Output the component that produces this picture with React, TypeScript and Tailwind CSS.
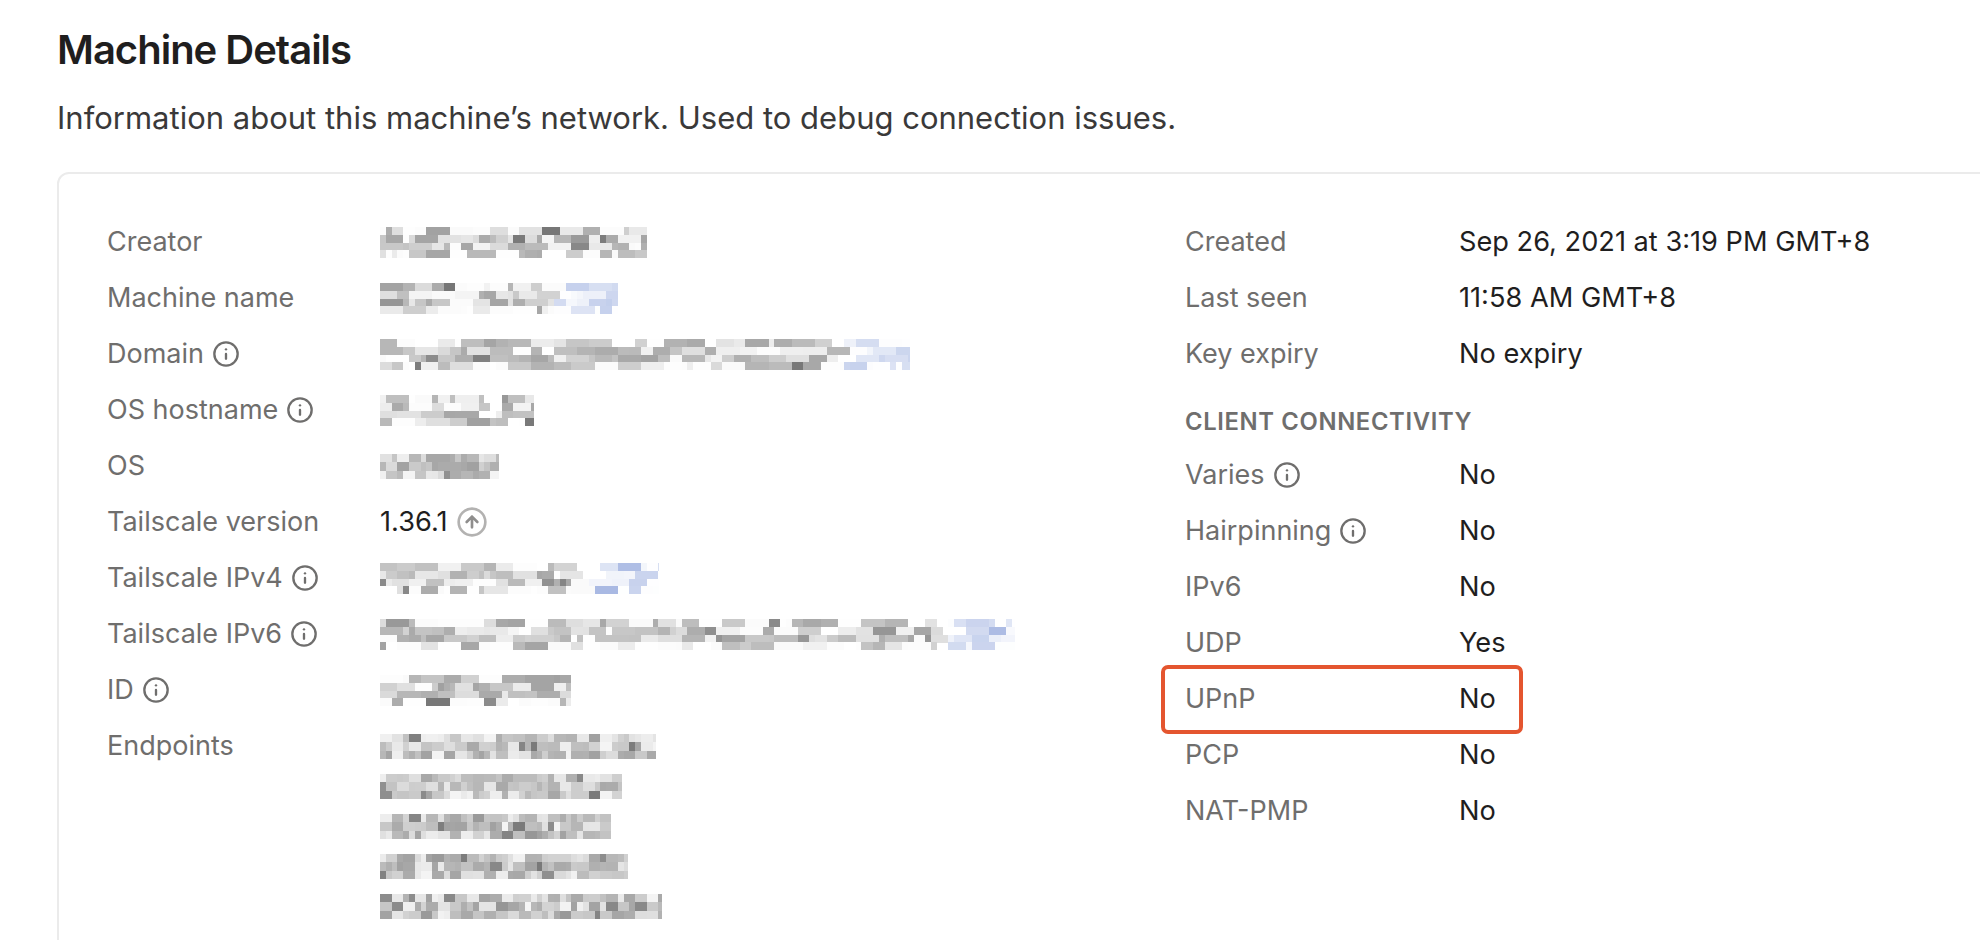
import { Info } from "lucide-react";

//seeded random so the blurred blocks are the same on every load
function makeRandom(seed: number) {
  let s = seed;
  return () => {
    s = (s * 1664525 + 1013904223) % 4294967296;
    return s / 4294967296;
  };
}

type MosaicProps = { width: number; height: number; seed: number; blueFrom?: number; gapAt?: [number, number]; dense?: boolean };

// ink 0..1 -> colour of one blurred block
function blockColor(ink: number, blue: boolean) {
  if (blue) {
    return `rgb(${Math.round(255 - ink * 80)},${Math.round(255 - ink * 65)},${Math.round(255 - ink * 26)})`;
  }
  const g = Math.round(255 - ink * 125);
  return `rgb(${g},${g},${g})`;
}

function Mosaic({ width, height, seed, blueFrom, gapAt, dense }: MosaicProps) {
  const cell = 5.8;
  const rand = makeRandom(seed * 7919);
  for (let i = 0; i < 8; i++) rand();
  const rows = Math.round(height / 7.75);
  const cellH = height / rows;
  const cols = Math.ceil(width / cell);
  const cells = [];
  for (let r = 0; r < rows; r++) {
    //top and bottom rows only had the tall letters and descenders in them
    const weight = dense ? 1.25 : r === rows - 1 ? 0.6 : r === 0 ? 0.85 : 1.1;
    let c = 0;
    while (c < cols) {
      const run = 1 + Math.floor(rand() * (dense ? 2 : 4));
      const pick = rand() / weight;
      let ink;
      if (pick < 0.52) ink = 0.35 + rand() * 0.4;
      else if (pick < 0.58) ink = 0.8 + rand() * 0.3;
      else if (pick < 0.84) ink = 0.08 + rand() * 0.22;
      else ink = rand() * 0.04;
      const x = c * cell;
      const w = Math.min(run * cell, width - x);
      const blue = blueFrom !== undefined && x >= blueFrom;
      const skip = gapAt && x >= gapAt[0] && x < gapAt[1];
      if (!skip && w > 0) {
        cells.push(<rect key={`${r}-${c}`} x={x} y={r * cellH} width={w} height={cellH + 0.5} fill={blockColor(ink, blue)} />);
      }
      c += run;
    }
  }
  return (
    <svg width={width} height={height} viewBox={`0 0 ${width} ${height}`} shapeRendering="crispEdges" className="block">
      {cells}
    </svg>
  );
}

function Label({ text, info }: { text: string; info?: boolean }) {
  return (
    <div className="flex items-center gap-[8px] text-[#6f6e6d]">
      <span>{text}</span>
      {info && <Info size={28} strokeWidth={2} className="text-[#6f6e6d]" />}
    </div>
  );
}

function Row({ label, info, width, children }: { label: string; info?: boolean; width: string; children: React.ReactNode }) {
  return (
    <div className="flex h-[56px] items-center">
      <div className={width}>
        <Label text={label} info={info} />
      </div>
      <div className="text-[27.2px] text-[#1f1e1e]">{children}</div>
    </div>
  );
}

const connectivity = [
  { label: "Varies", value: "No", info: true },
  { label: "Hairpinning", value: "No", info: true },
  { label: "IPv6", value: "No" },
  { label: "UDP", value: "Yes" },
];

export default function App() {
  return (
    <div className="h-[940px] w-[1980px] overflow-hidden bg-white pl-[57px] pt-[26px] font-['Inter',sans-serif] text-[27px] leading-[32px]">
      <h1 className="text-[40px] font-semibold leading-[48px] tracking-[-1px] text-[#1f1e1e]">Machine Details</h1>
      <p className="mt-[20px] h-[48px] text-[31px] leading-[48px] text-[#3a3939]">
        Information about this machine’s network. Used to debug connection issues.
      </p>

      <div className="mt-[30px] flex h-[900px] w-[2000px] rounded-[12px] border-2 border-[#ebebeb] pl-[48px] pt-[40px]">
        {/* left column */}
        <div className="w-[1078px]">
          <Row label="Creator" width="w-[273px]">
            <Mosaic width={267} height={31} seed={11} />
          </Row>
          <Row label="Machine name" width="w-[273px]">
            <Mosaic width={238} height={31} seed={22} blueFrom={171} />
          </Row>
          <Row label="Domain" info width="w-[273px]">
            <Mosaic width={530} height={31} seed={33} blueFrom={460} gapAt={[448, 460]} />
          </Row>
          <Row label="OS hostname" info width="w-[273px]">
            <Mosaic width={154} height={31} seed={44} />
          </Row>
          <Row label="OS" width="w-[273px]">
            <Mosaic width={119} height={25} seed={55} dense />
          </Row>
          <Row label="Tailscale version" width="w-[273px]">
            <div className="flex items-center gap-[9px]">
              <span>1.36.1</span>
              <svg width="32" height="32" viewBox="0 0 24 24" fill="none" strokeWidth="2" strokeLinecap="round" strokeLinejoin="round">
                <circle cx="12" cy="12" r="10" stroke="#b3b2b1" />
                <path d="m16 12-4-4-4 4M12 16V8" stroke="#8f8e8d" />
              </svg>
            </div>
          </Row>
          <Row label="Tailscale IPv4" info width="w-[273px]">
            <Mosaic width={279} height={31} seed={66} blueFrom={208} gapAt={[193, 208]} />
          </Row>
          <Row label="Tailscale IPv6" info width="w-[273px]">
            <Mosaic width={635} height={31} seed={77} blueFrom={567} gapAt={[552, 567]} />
          </Row>
          <Row label="ID" info width="w-[273px]">
            <Mosaic width={191} height={31} seed={88} />
          </Row>
          <div className="flex">
            <div className="flex h-[56px] w-[273px] items-center">
              <Label text="Endpoints" />
            </div>
            <div className="flex flex-col gap-[15px] pt-[16px]">
              <Mosaic width={276} height={25} seed={101} dense />
              <Mosaic width={242} height={25} seed={102} dense />
              <Mosaic width={231} height={25} seed={103} dense />
              <Mosaic width={248} height={25} seed={104} dense />
              <Mosaic width={282} height={25} seed={105} dense />
            </div>
          </div>
        </div>

        {/* right column */}
        <div>
          <Row label="Created" width="w-[274px]">Sep 26, 2021 at 3:19 PM GMT+8</Row>
          <Row label="Last seen" width="w-[274px]">11:58 AM GMT+8</Row>
          <Row label="Key expiry" width="w-[274px]">No expiry</Row>
          <h2 className="mb-[9px] mt-[24px] flex h-[32px] items-center text-[23.8px] font-semibold tracking-[0.65px] text-[#6f6e6d]">
            CLIENT CONNECTIVITY
          </h2>
          {connectivity.map((item) => (
            <Row key={item.label} label={item.label} info={item.info} width="w-[274px]">
              {item.value}
            </Row>
          ))}
          <div className="relative">
            <Row label="UPnP" width="w-[274px]">No</Row>
            <div className="absolute left-[-24px] top-[-6px] h-[69px] w-[362px] rounded-[7px] border-4 border-[#e4552f]" />
          </div>
          <Row label="PCP" width="w-[274px]">No</Row>
          <Row label="NAT-PMP" width="w-[274px]">No</Row>
        </div>
      </div>
    </div>
  );
}
